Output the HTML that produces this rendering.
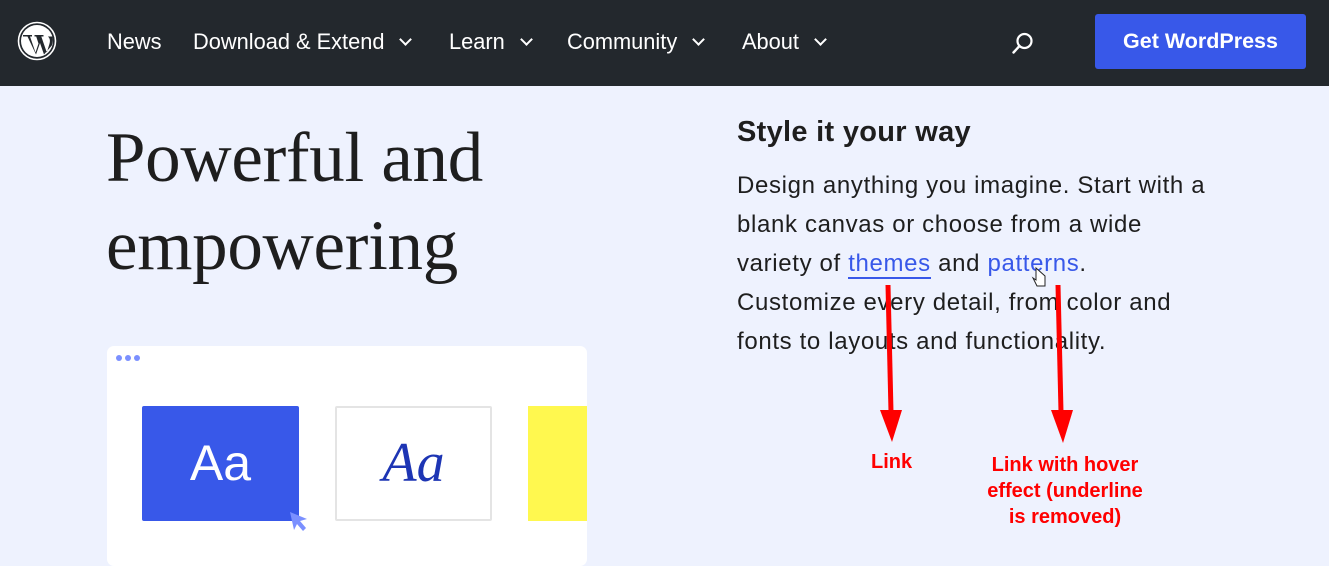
<!DOCTYPE html>
<html><head><meta charset="utf-8"><style>
*{margin:0;padding:0;box-sizing:border-box}
body{width:1329px;height:553px;overflow:hidden;background:#eef2fe;font-family:"Liberation Sans",sans-serif;position:relative;color:#1e1e1e}
.hdr{position:absolute;left:0;top:0;width:1329px;height:86px;background:#23282d}
.nav{position:absolute;top:29px;color:#fff;font-size:21.8px;white-space:nowrap}
.chev{display:inline-block;width:9px;height:9px;border-right:2px solid #fff;border-bottom:2px solid #fff;transform:rotate(45deg);margin-left:17px;position:relative;top:-5px}
.btn{position:absolute;left:1095px;top:14px;width:211px;height:55px;background:#3858e9;border-radius:3px;color:#fff;font-weight:bold;font-size:21.5px;text-align:center;line-height:55px}
h1{position:absolute;left:106px;top:114px;font-family:"Liberation Serif",serif;font-weight:normal;font-size:71px;line-height:88px;color:#1e1e1e;letter-spacing:-0.3px}
h2{position:absolute;left:737px;top:116px;font-size:29px;font-weight:bold;letter-spacing:0.3px}
.p{position:absolute;left:737px;top:166px;font-size:24px;line-height:39px;color:#1e1e1e;white-space:nowrap;letter-spacing:0.65px}
.p a{color:#3858e9;text-decoration:none}
.u{border-bottom:2px solid #3858e9}
.card{position:absolute;left:107px;top:346px;width:480px;height:220px;background:#fff;border-radius:7px;overflow:hidden}
.dot{position:absolute;top:9px;width:6px;height:6px;border-radius:50%;background:#7b90ff}
.t1{position:absolute;left:35px;top:60px;width:157px;height:115px;background:#3858e9;border-radius:2px;color:#fff;font-size:50px;text-align:center;line-height:115px}
.t2{position:absolute;left:228px;top:60px;width:157px;height:115px;border:2px solid #e4e4e4;border-radius:2px;color:#1d35b4;font-family:"Liberation Serif",serif;font-size:56px;text-align:center;line-height:111px}
.t3{position:absolute;left:421px;top:60px;width:60px;height:115px;background:#fff84f}
.lbl{position:absolute;color:#f00;font-weight:bold;font-size:20px;text-align:center;line-height:26px;white-space:nowrap}
</style></head><body>
<div class="hdr">
<svg style="position:absolute;left:17px;top:21px" width="40" height="40" viewBox="0 0 40 40"><circle cx="20" cy="20" r="18.5" fill="none" stroke="#fff" stroke-width="1.6"/><circle cx="20" cy="20" r="16" fill="#fff"/><path d="M6 14h9v1.5h-2l5.5 16 3-9-2.3-7h-1.7V14h9v1.5h-2.2l5.5 16 2.6-8.5c1.2-4 .2-6-1.5-7.5h4.5c1 3 .5 6-.6 9L27 33.5 23 22l-4 11.5L10.5 15.5H6z" fill="#23282d"/></svg>
<div class="nav" style="left:107px">News</div>
<div class="nav" style="left:193px">Download &amp; Extend<span class="chev"></span></div>
<div class="nav" style="left:449px">Learn<span class="chev"></span></div>
<div class="nav" style="left:567px">Community<span class="chev"></span></div>
<div class="nav" style="left:742px">About<span class="chev"></span></div>
<svg style="position:absolute;left:1011px;top:31px" width="24" height="24" viewBox="0 0 24 24"><circle cx="13.5" cy="10" r="7" fill="none" stroke="#fff" stroke-width="2.2"/><path d="M8.5 15L2.5 21.5" stroke="#fff" stroke-width="2.4" stroke-linecap="round"/></svg>
<div class="btn">Get WordPress</div>
</div>
<h1>Powerful and<br>empowering</h1>
<h2>Style it your way</h2>
<div class="p">Design anything you imagine. Start with a<br>blank canvas or choose from a wide<br>variety of <a class="u">themes</a> and <a>patterns</a>.<br>Customize every detail, from color and<br>fonts to layouts and functionality.</div>
<div class="card">
<div class="dot" style="left:9px"></div><div class="dot" style="left:18px"></div><div class="dot" style="left:27px"></div>
<div class="t1">Aa</div>
<div class="t2"><i>A</i><i>a</i></div>
<div class="t3"></div>
<svg style="position:absolute;left:181px;top:164px" width="22" height="22" viewBox="0 0 22 22"><path d="M2 2l17 7-7 2 6 7-3 3-6-7-3 6z" fill="#7b90ff"/></svg>
</div>
<svg style="position:absolute;left:0;top:0" width="1329" height="553"><path d="M888 285L891 412" stroke="#f00" stroke-width="5"/><path d="M880 410h22l-10 32z" fill="#f00"/><path d="M1058 285L1061 412" stroke="#f00" stroke-width="5"/><path d="M1051 410h22l-10 33z" fill="#f00"/>
<path d="M1036 268v12l-3 -2 4 8h8v-10z" fill="#fff" stroke="#222" stroke-width="1"/></svg>
<div class="lbl" style="left:871px;top:449px">Link</div>
<div class="lbl" style="left:976px;top:452px;width:178px">Link with hover<br>effect (underline<br>is removed)</div>
</body></html>
